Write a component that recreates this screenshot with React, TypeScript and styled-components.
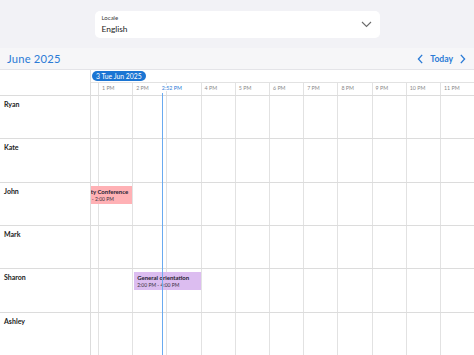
import styled, { createGlobalStyle } from 'styled-components'

const SLOT = 34.2
const START_HOUR = 12
const HOURS = 12
const SCROLL = 27.2
const ROW_HEIGHT = 43.35

type CalendarEvent = {
  resource: string
  title: string
  start: number
  end: number
  time: string
  color: string
}

const resources = ['Ryan', 'Kate', 'John', 'Mark', 'Sharon', 'Ashley']

const events: CalendarEvent[] = [
  {
    resource: 'John',
    title: 'University Conference',
    start: 12,
    end: 14,
    time: '12:00 PM - 2:00 PM',
    color: '#ffb1b5',
  },
  {
    resource: 'Sharon',
    title: 'General orientation',
    start: 14,
    end: 16,
    time: '2:00 PM - 4:00 PM',
    color: '#dcbdf0',
  },
]

const NOW = 14 + 52 / 60

const hourLabel = (h: number) => {
  const v = h % 12 === 0 ? 12 : h % 12
  return `${v} ${h < 12 || h === 24 ? 'AM' : 'PM'}`
}

const toX = (hour: number) => (hour - START_HOUR) * SLOT - SCROLL

const App = () => {
  const hours = Array.from({ length: HOURS }, (_, i) => START_HOUR + i)
  return (
    <>
      <GlobalStyle />
      <TopBar>
        <SelectCard>
          <SelectText>
            <SelectLabel>Locale</SelectLabel>
            <SelectValue>English</SelectValue>
          </SelectText>
          <svg width="11" height="7" viewBox="0 0 11 7">
            <path d="M1 1l4.5 4.5L10 1" fill="none" stroke="#6b6b6b" strokeWidth="1.1" />
          </svg>
        </SelectCard>
      </TopBar>
      <Scheduler>
        <Header>
          <Title>June 2025</Title>
          <Nav>
            <NavArrow viewBox="0 0 8 12">
              <path d="M6 1L1.5 6 6 11" />
            </NavArrow>
            <TodayButton>Today</TodayButton>
            <NavArrow viewBox="0 0 8 12">
              <path d="M2 1l4.5 5L2 11" />
            </NavArrow>
          </Nav>
        </Header>
        <Grid>
          <ResourceColumn>
            <ResourceHead />
            {resources.map((r) => (
              <ResourceCell key={r}>{r}</ResourceCell>
            ))}
          </ResourceColumn>
          <Timeline>
            <DateRow>
              <DatePill>3 Tue Jun 2025</DatePill>
            </DateRow>
            <TimeRow>
              {hours.map((h) => (
                <HourCell key={h} style={{ left: toX(h) }}>
                  {h === 15 ? '' : hourLabel(h)}
                </HourCell>
              ))}
              <NowLabel style={{ left: toX(NOW) }}>2:52 PM</NowLabel>
            </TimeRow>
            {resources.map((r) => (
              <TrackRow key={r}>
                {hours.map((h) => (
                  <SlotLine key={h} style={{ left: toX(h) }} />
                ))}
                {events
                  .filter((e) => e.resource === r)
                  .map((e) => (
                    <EventBox
                      key={e.title}
                      $color={e.color}
                      style={{ left: toX(e.start) + 2, width: (e.end - e.start) * SLOT - 2 }}
                    >
                      <EventTitle>{e.title}</EventTitle>
                      <EventTime>{e.time}</EventTime>
                    </EventBox>
                  ))}
              </TrackRow>
            ))}
            <NowLine style={{ left: toX(NOW) }} />
          </Timeline>
        </Grid>
      </Scheduler>
    </>
  )
}

const GlobalStyle = createGlobalStyle`
  body {
    margin: 0;
    background: #ffffff;
    font-family: Lato, "Open Sans", sans-serif;
    color: #1f1f1f;
  }
`

const TopBar = styled.div`
  background: #f2f2f6;
  padding: 11px 0 10px;
  display: flex;
  justify-content: center;
`

const SelectCard = styled.div`
  width: 285px;
  height: 27px;
  box-sizing: border-box;
  background: #ffffff;
  border-radius: 5px;
  padding: 0 8px 0 7px;
  display: flex;
  align-items: center;
  justify-content: space-between;
`

const SelectText = styled.div`
  display: flex;
  flex-direction: column;
  gap: 1px;
`

const SelectLabel = styled.span`
  font-size: 6px;
  line-height: 8px;
  color: #3a3a3a;
`

const SelectValue = styled.span`
  font-size: 8.4px;
  line-height: 12px;
  color: #1c1c1c;
`

const Scheduler = styled.div`
  display: flex;
  flex-direction: column;
`

const Header = styled.div`
  height: 21px;
  background: #f6f6f8;
  border-bottom: 1px solid #e4e4e8;
  display: flex;
  align-items: center;
  justify-content: space-between;
  padding: 0 8px 0 7px;
`

const Title = styled.h1`
  margin: 0;
  font-size: 11.2px;
  font-weight: 400;
  color: #2b7bd6;
  letter-spacing: 0.2px;
`

const Nav = styled.div`
  display: flex;
  align-items: center;
  gap: 6px;
`

const NavArrow = styled.svg`
  width: 7px;
  height: 10px;
  fill: none;
  stroke: #2b7bd6;
  stroke-width: 1.6;
`

const TodayButton = styled.span`
  font-size: 8.6px;
  font-weight: 700;
  color: #2b7bd6;
`

const Grid = styled.div`
  display: flex;
`

const ResourceColumn = styled.div`
  width: 91px;
  flex-shrink: 0;
  border-right: 1px solid #dcdcdc;
  box-sizing: border-box;
  background: #ffffff;
`

const ResourceHead = styled.div`
  height: 25px;
  border-bottom: 1px solid #dcdcdc;
`

const ResourceCell = styled.div`
  height: ${ROW_HEIGHT}px;
  box-sizing: border-box;
  border-bottom: 1px solid #dcdcdc;
  padding: 4px 4px;
  font-size: 7px;
  font-weight: 700;
  color: #222;
`

const Timeline = styled.div`
  position: relative;
  flex: 1;
  overflow: hidden;
`

const DateRow = styled.div`
  height: 12px;
  display: flex;
  align-items: center;
  padding-left: 1px;
`

const DatePill = styled.span`
  background: #1b75d3;
  color: #ffffff;
  font-size: 6.8px;
  line-height: 10px;
  padding: 0 4px;
  border-radius: 6px;
`

const TimeRow = styled.div`
  position: relative;
  height: 12px;
  border-top: 1px solid #e2e2e2;
  border-bottom: 1px solid #dcdcdc;
`

const HourCell = styled.div`
  position: absolute;
  top: 0;
  bottom: 0;
  width: ${SLOT}px;
  box-sizing: border-box;
  border-left: 1px solid #e2e2e2;
  padding: 2px 0 0 3px;
  font-size: 5.3px;
  color: #8a8a8a;
`

const NowLabel = styled.span`
  position: absolute;
  top: 2px;
  font-size: 5.3px;
  color: #2b7bd6;
  background: #ffffff;
  padding-right: 1px;
`

const TrackRow = styled.div`
  position: relative;
  height: ${ROW_HEIGHT}px;
  box-sizing: border-box;
  border-bottom: 1px solid #dcdcdc;
`

const SlotLine = styled.div`
  position: absolute;
  top: 0;
  bottom: 0;
  border-left: 1px solid #e2e2e2;
`

const EventBox = styled.div<{ $color: string }>`
  position: absolute;
  top: 3px;
  height: 18px;
  box-sizing: border-box;
  background: ${({ $color }) => $color};
  padding: 2px 3px;
  overflow: hidden;
  white-space: nowrap;
`

const EventTitle = styled.div`
  font-size: 6px;
  font-weight: 700;
  line-height: 8px;
  color: #262030;
`

const EventTime = styled.div`
  font-size: 5px;
  line-height: 7px;
  color: #3a3340;
`

const NowLine = styled.div`
  position: absolute;
  top: 23px;
  bottom: 0;
  width: 1px;
  background: #6aaaf0;
`

export default App
